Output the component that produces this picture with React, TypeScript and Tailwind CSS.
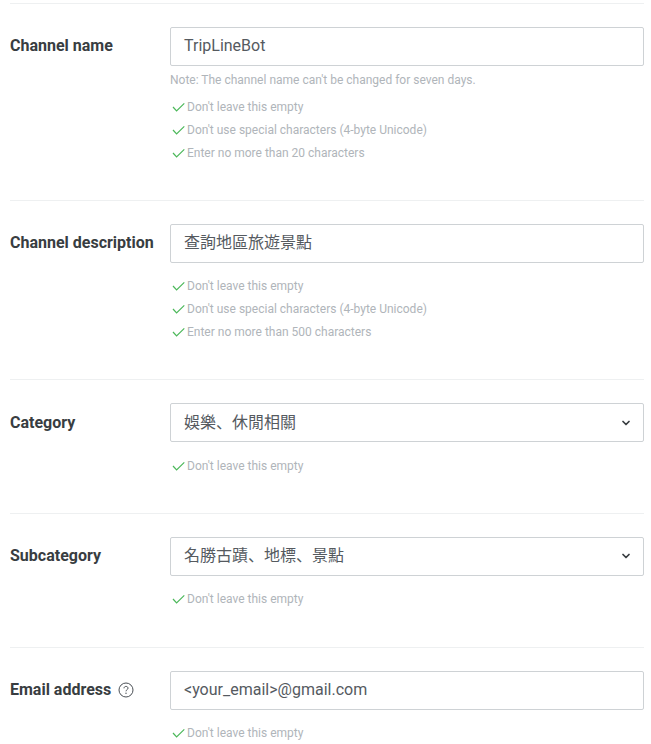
import React from "react";
import { ChevronDown } from "lucide-react";

interface FieldProps {
  label: string;
  value: string;
  note?: string;
  hints: string[];
  select?: boolean;
  help?: boolean;
  nudge?: boolean;
}

const Check = () => (
  <svg width="14" height="14" viewBox="0 0 14 14" className="mr-[1px] shrink-0" fill="none">
    <path d="M1 7 L4.6 11 L12.3 3.3" stroke="#4cb85a" strokeWidth="1.2" />
  </svg>
);

const HelpIcon = () => (
  <svg width="16" height="16" viewBox="0 0 16 16" fill="none" className="ml-[7px]">
    <circle cx="8" cy="8" r="7" stroke="#4a4f55" strokeWidth="1" />
    <path
      d="M6 6.3 C6 5 7 4.4 8 4.4 C9.1 4.4 10 5.1 10 6.2 C10 7.6 8 7.7 8 9.3"
      stroke="#4a4f55"
      strokeWidth="1"
    />
    <circle cx="8" cy="11.3" r="0.7" fill="#4a4f55" />
  </svg>
);

const Field = ({ label, value, note, hints, select, help, nudge }: FieldProps) => {
  return (
    <div className="flex border-t border-[#eef0f1] pt-[23px]">
      <div
        className={
          (nudge ? "pb-0" : "pb-[2px]") +
          " w-[160px] shrink-0 h-[39px] flex items-center text-[16px] font-bold text-[#383d41]"
        }
      >
        {label}
        {help && <HelpIcon />}
      </div>
      <div className="flex-1">
        <div
          className={
            (nudge ? "pb-0" : "pb-[2px]") +
            " h-[39px] flex items-center justify-between border border-[#ced2d5] rounded-[2px] pl-[13px] pr-[11px] text-[16px] text-[#555a5f]"
          }
        >
          <span>{value}</span>
          {select && <ChevronDown size={12} strokeWidth={3.5} color="#383d41" />}
        </div>
        {note ? (
          <p className="mt-[5px] h-[18px] leading-[18px] text-[12px] text-[#b0b5ba]">{note}</p>
        ) : null}
        <ul className={note ? "mt-[6px]" : nudge ? "mt-[12px]" : "mt-[11px]"}>
          {hints.map((hint, index) => (
            <li
              key={index}
              className="h-[23px] flex items-center pl-[2px] text-[12px] text-[#b0b5ba]"
            >
              <Check />
              {hint}
            </li>
          ))}
        </ul>
      </div>
    </div>
  );
};

export default function App() {
  return (
    <div
      className="w-[651px] h-[744px] overflow-hidden bg-white pt-[3px] pl-[10px] pr-[7px]"
      style={{ fontFamily: "Roboto, 'Noto Sans CJK JP', sans-serif" }}
    >
      <div className="h-[197px]">
        <Field
          label="Channel name"
          value="TripLineBot"
          note="Note: The channel name can't be changed for seven days."
          hints={[
            "Don't leave this empty",
            "Don't use special characters (4-byte Unicode)",
            "Enter no more than 20 characters",
          ]}
        />
      </div>
      <div className="h-[179px]">
        <Field
          label="Channel description"
          value="查詢地區旅遊景點"
          hints={[
            "Don't leave this empty",
            "Don't use special characters (4-byte Unicode)",
            "Enter no more than 500 characters",
          ]}
        />
      </div>
      <div className="h-[134px]">
        <Field label="Category" value="娛樂、休閒相關" select nudge hints={["Don't leave this empty"]} />
      </div>
      <div className="h-[134px]">
        <Field label="Subcategory" value="名勝古蹟、地標、景點" select hints={["Don't leave this empty"]} />
      </div>
      <Field label="Email address" value="<your_email>@gmail.com" help hints={["Don't leave this empty"]} />
    </div>
  );
}
